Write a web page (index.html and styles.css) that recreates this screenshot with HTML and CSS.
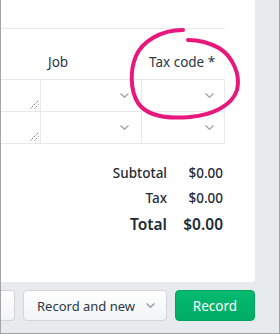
FILE: index.html
```html
<!DOCTYPE html>
<html>
<head>
<meta charset="utf-8">
<link rel="stylesheet" href="styles.css">
</head>
<body>
<div class="frame">
  <div class="card">
    <div class="grid">
      <div class="head">
        <div class="hcell c1"></div>
        <div class="hcell job">Job</div>
        <div class="hcell tax">Tax code *</div>
      </div>
      <div class="row">
        <div class="cell c1">
          <svg class="grip" width="9" height="9" viewBox="0 0 9 9"><line x1="0.5" y1="8.5" x2="8.5" y2="0.5"/><line x1="4.5" y1="8.5" x2="8.5" y2="4.5"/></svg>
        </div>
        <div class="cell job sel"><svg class="chev" width="9" height="5" viewBox="0 0 9 5"><path d="M0.5 0.5 L4.5 4.3 L8.5 0.5"/></svg></div>
        <div class="cell tax sel"><svg class="chev" width="9" height="5" viewBox="0 0 9 5"><path d="M0.5 0.5 L4.5 4.3 L8.5 0.5"/></svg></div>
      </div>
      <div class="row">
        <div class="cell c1">
          <svg class="grip" width="9" height="9" viewBox="0 0 9 9"><line x1="0.5" y1="8.5" x2="8.5" y2="0.5"/><line x1="4.5" y1="8.5" x2="8.5" y2="4.5"/></svg>
        </div>
        <div class="cell job sel"><svg class="chev" width="9" height="5" viewBox="0 0 9 5"><path d="M0.5 0.5 L4.5 4.3 L8.5 0.5"/></svg></div>
        <div class="cell tax sel"><svg class="chev" width="9" height="5" viewBox="0 0 9 5"><path d="M0.5 0.5 L4.5 4.3 L8.5 0.5"/></svg></div>
      </div>
    </div>
    <div class="totals">
      <div class="lbl">Subtotal</div><div class="val">$0.00</div>
      <div class="lbl">Tax</div><div class="val">$0.00</div>
      <div class="lbl total">Total</div><div class="val total">$0.00</div>
    </div>
    <svg class="mark" width="254" height="282" viewBox="1 0 254 282">
      <path d="M183,30 C160,30 142,42 136,56 C130,70 130,90 138,103 C147,116 168,119 190,117 C212,115 232,106 237,90 C241,74 232,56 219,48 C208,42 196,40 188,40"/>
    </svg>
  </div>
  <div class="actions">
    <button class="btn partial"></button>
    <button class="btn secondary"><span>Record and new</span><svg class="chev dark" width="9" height="5" viewBox="0 0 9 5"><path d="M0.5 0.5 L4.5 4.3 L8.5 0.5"/></svg></button>
    <button class="btn primary">Record</button>
  </div>
</div>
</body>
</html>
```
FILE: styles.css
```css
html, body {
  margin: 0;
  padding: 0;
}
body {
  background: #e8ebee;
  font-family: "Noto Sans", "Open Sans", sans-serif;
  color: #25323d;
}
.frame {
  width: 280px;
  height: 334px;
  box-sizing: border-box;
  border-left: 1px solid #a3a3a3;
  border-right: 1px solid #a3a3a3;
  border-bottom: 1px solid #a3a3a3;
  background: #e8ebee;
  overflow: hidden;
}
.card {
  position: relative;
  width: 254px;
  height: 282px;
  box-sizing: border-box;
  background: #fff;
  border-bottom-right-radius: 4px;
  padding-top: 28px;
}
.grid {
  width: 224px;
}
.head {
  display: flex;
  height: 52px;
  box-sizing: border-box;
  border-top: 1px solid #e6e8eb;
  border-bottom: 1px solid #e6e8eb;
}
.hcell {
  display: flex;
  align-items: flex-end;
  box-sizing: border-box;
  padding: 0 0 7px 8px;
  font-size: 13.5px;
  line-height: 20px;
  color: #2a3744;
}
.c1 { width: 39px; }
.job { width: 101px; }
.tax { width: 84px; }
.row {
  display: flex;
  height: 32px;
  box-sizing: border-box;
  border-bottom: 1px solid #e6e8eb;
}
.cell {
  box-sizing: border-box;
  height: 31px;
  display: flex;
}
.cell.c1 {
  justify-content: flex-end;
  align-items: flex-end;
  padding: 0 1px 2px 0;
}
.cell.job {
  border-left: 1px solid #e6e8eb;
}
.cell.tax {
  border-left: 1px solid #e6e8eb;
  border-right: 1px solid #e6e8eb;
}
.sel {
  justify-content: flex-end;
  align-items: center;
}
.cell.job.sel { padding-right: 12px; }
.cell.tax.sel { padding-right: 10px; }
.grip line {
  stroke: #5a5a5a;
  stroke-width: 1;
  stroke-dasharray: 1.2 1.2;
}
.chev path {
  fill: none;
  stroke: #9aa2aa;
  stroke-width: 1.2;
}
.totals {
  display: grid;
  grid-template-columns: auto 56px;
  justify-content: end;
  padding-right: 32px;
  margin-top: 17px;
}
.lbl, .val {
  text-align: right;
  font-size: 13.5px;
  line-height: 25px;
  font-weight: 500;
  color: #1f2b36;
}
.lbl.total, .val.total {
  font-size: 15.5px;
  font-weight: 600;
  line-height: 27px;
}
.mark {
  position: absolute;
  left: 0;
  top: 0;
  pointer-events: none;
}
.mark path {
  fill: none;
  stroke: #e8177b;
  stroke-width: 4;
  stroke-linecap: round;
}
.actions {
  display: flex;
  gap: 8px;
  margin-top: 8px;
  width: 254px;
  height: 31px;
}
.btn {
  box-sizing: border-box;
  height: 31px;
  border-radius: 4px;
  font-family: "Noto Sans", "Open Sans", sans-serif;
  font-size: 13px;
  padding: 0;
  margin: 0;
}
.partial {
  width: 14px;
  border: 1px solid #d1d5da;
  border-left: none;
  border-radius: 0 4px 4px 0;
  background: linear-gradient(#ffffff, #f3f4f6);
}
.secondary {
  width: 144px;
  border: 1px solid #d1d5da;
  background: linear-gradient(#ffffff, #f2f3f5);
  color: #2a3744;
  display: flex;
  align-items: center;
  gap: 11px;
  padding: 0 0 0 13px;
}
.chev.dark path { stroke: #8f979f; }
.primary {
  width: 80px;
  border: 1px solid #00a562;
  background: linear-gradient(#02bb70, #00ad66);
  color: #fff;
  font-size: 13.5px;
}
```
